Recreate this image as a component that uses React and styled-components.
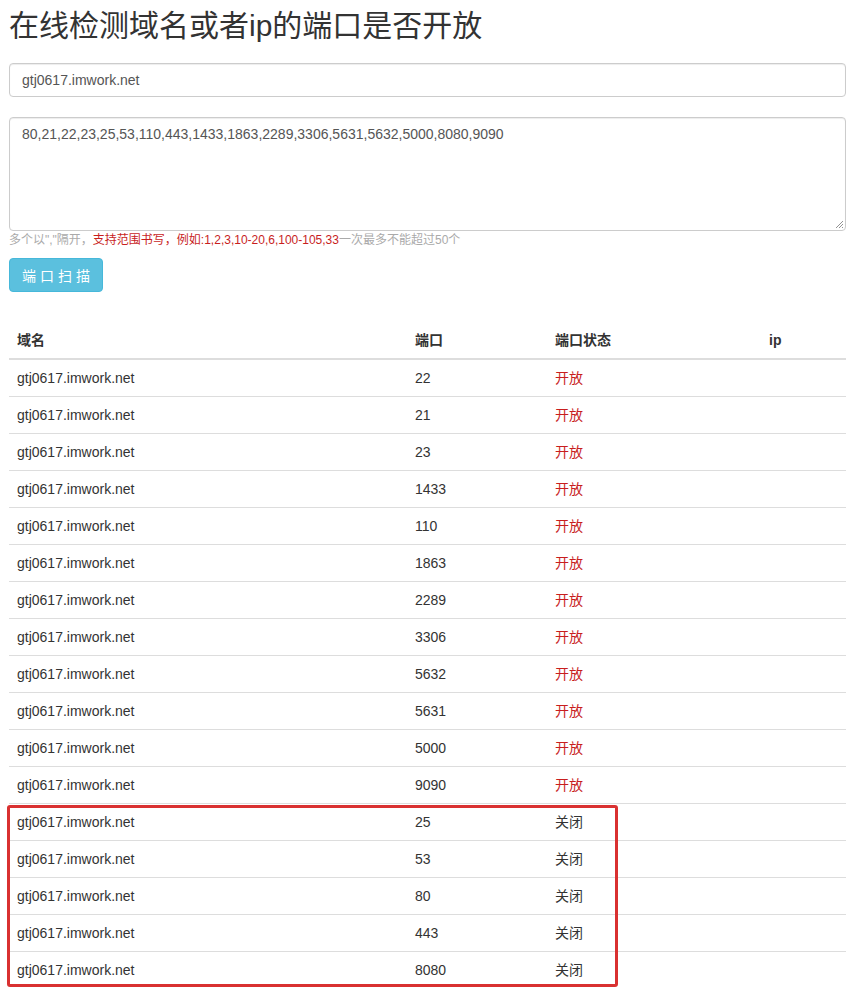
import React from "react";
import styled, { createGlobalStyle } from "styled-components";

const Global = createGlobalStyle`
  html, body { margin: 0; padding: 0; background: #fff; }
  body {
    font-family: "Liberation Sans", Arial, "Noto Sans CJK SC", sans-serif;
    font-size: 14px;
    line-height: 1.42857;
    color: #333;
  }
  * { box-sizing: border-box; }
`;

const Page = styled.div`
  padding: 0 8px 0 9px;
  width: 854px;
`;

const Title = styled.h1`
  margin: 0;
  padding-top: 6px;
  height: 56px;
  font-size: 30px;
  line-height: 40px;
  font-weight: 400;
  color: #333;
`;

const Form = styled.div`
  display: flex;
  flex-direction: column;
`;

const TextInput = styled.div`
  margin-top: 7px;
  height: 34px;
  border: 1px solid #ccc;
  border-radius: 4px;
  padding: 6px 12px;
  font-size: 14px;
  line-height: 20px;
  color: #555;
  box-shadow: inset 0 1px 1px rgba(0, 0, 0, 0.075);
`;

const TextArea = styled.div`
  position: relative;
  margin-top: 20px;
  height: 114px;
  border: 1px solid #ccc;
  border-radius: 4px;
  padding: 6px 12px;
  font-size: 14px;
  line-height: 20px;
  color: #555;
  box-shadow: inset 0 1px 1px rgba(0, 0, 0, 0.075);
`;

const Grip = styled.svg`
  position: absolute;
  right: 1px;
  bottom: 1px;
`;

const Help = styled.div`
  margin-top: 1px;
  font-size: 12px;
  line-height: 16px;
  color: #aaa;
  white-space: nowrap;
`;

const Red = styled.span`
  color: #c81e1e;
`;

const Button = styled.button`
  margin-top: 10px;
  align-self: flex-start;
  width: 94px;
  height: 34px;
  background: #5bc0de;
  border: 1px solid #46b8da;
  border-radius: 4px;
  color: #fff;
  font-family: "Liberation Sans", Arial, "Noto Sans CJK SC", sans-serif;
  font-size: 14px;
  letter-spacing: 4px;
  padding: 0 0 0 4px;
  text-align: center;
`;

const TableWrap = styled.div`
  position: relative;
  margin-top: 30px;
`;

const Table = styled.table`
  width: 837px;
  border-collapse: collapse;
  border-spacing: 0;
`;

const Th = styled.th`
  text-align: left;
  font-weight: bold;
  font-size: 14px;
  line-height: 20px;
  padding: 8px;
  border-bottom: 2px solid #ddd;
  width: ${(p) => p.$w || "auto"};
`;

const Td = styled.td`
  font-size: 14px;
  line-height: 20px;
  padding: 8px;
  border-top: 1px solid #ddd;
  color: ${(p) => (p.$red ? "#c81e1e" : "#333")};
`;

const Marker = styled.div`
  position: absolute;
  left: -2px;
  top: 483px;
  width: 611px;
  height: 182px;
  border: 3px solid #d93131;
  border-radius: 3px;
  pointer-events: none;
`;

const host = "gtj0617.imwork.net";
const rows = [
  ["22", true],
  ["21", true],
  ["23", true],
  ["1433", true],
  ["110", true],
  ["1863", true],
  ["2289", true],
  ["3306", true],
  ["5632", true],
  ["5631", true],
  ["5000", true],
  ["9090", true],
  ["25", false],
  ["53", false],
  ["80", false],
  ["443", false],
  ["8080", false],
];

export default function App() {
  return (
    <Page>
      <Global />
      <Title>在线检测域名或者ip的端口是否开放</Title>
      <Form>
        <TextInput>{host}</TextInput>
        <TextArea>
          80,21,22,23,25,53,110,443,1433,1863,2289,3306,5631,5632,5000,8080,9090
          <Grip width="10" height="10" viewBox="0 0 10 10">
            <path d="M9 2 L2 9 M9 5 L5 9 M9 8 L8 9" stroke="#777" strokeWidth="0.8" />
          </Grip>
        </TextArea>
        <Help>
          多个以","隔开，<Red>支持范围书写，例如:1,2,3,10-20,6,100-105,33</Red>一次最多不能超过50个
        </Help>
        <Button>端口扫描</Button>
      </Form>
      <TableWrap>
        <Table>
          <thead>
            <tr>
              <Th $w="398px">域名</Th>
              <Th $w="140px">端口</Th>
              <Th $w="214px">端口状态</Th>
              <Th>ip</Th>
            </tr>
          </thead>
          <tbody>
            {rows.map(([port, open], i) => (
              <tr key={i}>
                <Td>{host}</Td>
                <Td>{port}</Td>
                <Td $red={open}>{open ? "开放" : "关闭"}</Td>
                <Td></Td>
              </tr>
            ))}
          </tbody>
        </Table>
        <Marker />
      </TableWrap>
    </Page>
  );
}
